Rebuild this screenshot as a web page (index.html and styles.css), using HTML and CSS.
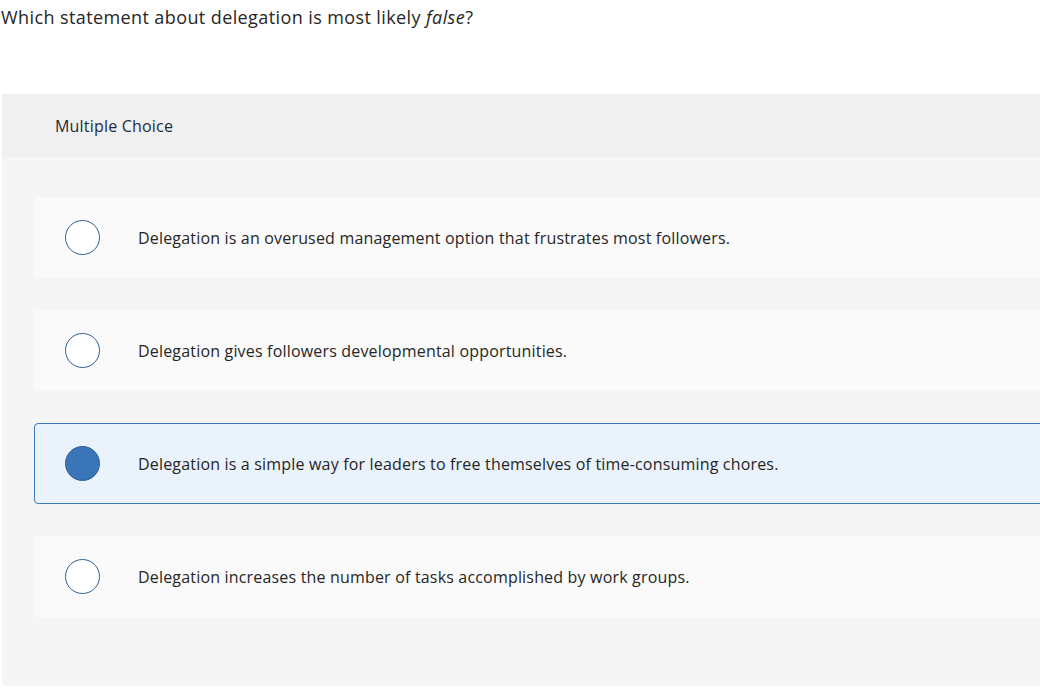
FILE: index.html
```html
<!DOCTYPE html>
<html lang="en">
<head>
<meta charset="utf-8">
<title>Multiple Choice</title>
<link rel="stylesheet" href="styles.css">
</head>
<body>
<div class="question">Which statement about delegation is most likely <em>false</em>?</div>
<section class="panel">
  <header class="panel-head">Multiple Choice</header>
  <div class="options">
    <label class="option">
      <span class="radio"></span>
      <span class="text">Delegation is an overused management option that frustrates most followers.</span>
    </label>
    <label class="option">
      <span class="radio"></span>
      <span class="text">Delegation gives followers developmental opportunities.</span>
    </label>
    <label class="option selected">
      <span class="radio"></span>
      <span class="text">Delegation is a simple way for leaders to free themselves of time-consuming chores.</span>
    </label>
    <label class="option">
      <span class="radio"></span>
      <span class="text">Delegation increases the number of tasks accomplished by work groups.</span>
    </label>
  </div>
</section>
</body>
</html>
```

FILE: styles.css
```css
html, body {
  margin: 0;
  padding: 0;
  background: #ffffff;
  overflow: hidden;
}
body {
  width: 1040px;
  height: 693px;
  font-family: "Open Sans", "Liberation Sans", sans-serif;
  color: #262626;
}
.question {
  font-size: 18px;
  letter-spacing: 0.4px;
  line-height: 34px;
  height: 94px;
  padding-left: 1px;
}
.question em {
  font-style: italic;
}
.panel {
  margin-left: 2px;
  width: 1060px;
  height: 592px;
  background: #f5f5f5;
  border-radius: 0 0 0 4px;
}
.panel-head {
  height: 63px;
  background: #f0f0f0;
  box-sizing: border-box;
  padding-left: 53px;
  display: flex;
  align-items: center;
  font-size: 16px;
  letter-spacing: 0.2px;
  color: #1f2a3a;
}
.options {
  padding: 40px 0 0 32px;
  display: flex;
  flex-direction: column;
  gap: 32px;
}
.option {
  height: 81px;
  box-sizing: border-box;
  background: #fafafa;
  border-radius: 4px;
  display: flex;
  align-items: center;
  padding-left: 31px;
}
.option.selected {
  background: #eaf2fb;
  border: 1px solid #3c78bd;
  padding-left: 30px;
}
.radio {
  width: 35px;
  height: 35px;
  box-sizing: border-box;
  border: 1.5px solid #2f5f94;
  border-radius: 50%;
  background: #ffffff;
  flex: none;
}
.selected .radio {
  background: #3a75b8;
  border-color: #2e5f96;
}
.text {
  margin-left: 38px;
  font-size: 16px;
  letter-spacing: 0.18px;
  color: #262626;
}
```
